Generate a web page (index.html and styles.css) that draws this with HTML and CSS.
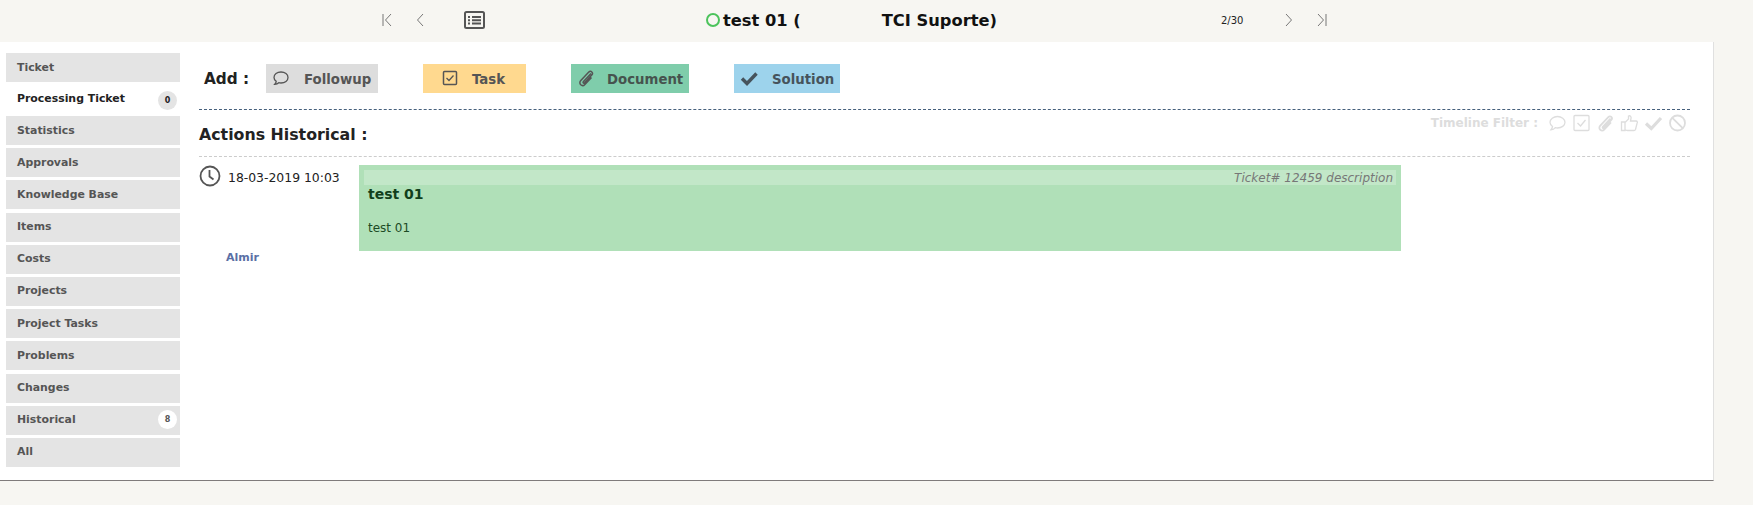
FILE: index.html
```html
<!DOCTYPE html>
<html lang="en">
<head>
    <meta charset="UTF-8">
    <title>test 01</title>
    <link rel="stylesheet" href="styles.css">
</head>
<body>
    <div class="topbar">
        <svg class="nav-icon first-nav" viewBox="0 0 10 14"><path d="M1 1v12M9 1 3.5 7 9 13"/></svg>
        <svg class="nav-icon prev-nav" viewBox="0 0 10 14"><path d="M8 1 2.5 7 8 13"/></svg>
        <svg class="list-icon" viewBox="0 0 21 18"><rect x="1" y="1" width="19" height="16" rx="1.5" fill="none" stroke="#555" stroke-width="2"/><path d="M4 5h2v2H4zM4 8.2h2v2H4zM4 11.4h2v2H4zM8 5h9v2H8zM8 8.2h9v2H8zM8 11.4h9v2H8z" fill="#555"/></svg>
        <span class="status-dot"></span>
        <span class="ticket-title">test 01 (</span>
        <span class="ticket-title entity">TCI Suporte)</span>
        <span class="pager">2/30</span>
        <svg class="nav-icon next-nav" viewBox="0 0 10 14"><path d="M2 1 7.5 7 2 13"/></svg>
        <svg class="nav-icon last-nav" viewBox="0 0 10 14"><path d="M1 1 6.5 7 1 13M9 1v12"/></svg>
    </div>

    <div class="main">
        <ul class="tabs">
            <li class="tab">Ticket</li>
            <li class="tab active">Processing Ticket <span class="badge">0</span></li>
            <li class="tab">Statistics</li>
            <li class="tab">Approvals</li>
            <li class="tab">Knowledge Base</li>
            <li class="tab">Items</li>
            <li class="tab">Costs</li>
            <li class="tab">Projects</li>
            <li class="tab">Project Tasks</li>
            <li class="tab">Problems</li>
            <li class="tab">Changes</li>
            <li class="tab">Historical <span class="badge">8</span></li>
            <li class="tab">All</li>
        </ul>

        <div class="content">
            <div class="add-row">
                <span class="add-label">Add :</span>
                <div class="add-btn followup">
                    <svg class="btn-icon" viewBox="0 0 18 18"><path d="M9 3c4 0 7 2.300 7 5.500S13 14 9 14c-.8 0-1.500-.1-2.200-.3C5.800 14.700 4.300 15.300 2.800 15.300c.8-.8 1.300-1.800 1.400-2.900C2.800 11.400 2 10 2 8.500 2 5.300 5 3 9 3z" fill="none" stroke="#555" stroke-width="1.300"/></svg>
                    Followup
                </div>
                <div class="add-btn task">
                    <svg class="btn-icon" viewBox="0 0 18 18"><rect x="2.500" y="2.500" width="13" height="13" rx="1" fill="none" stroke="#555" stroke-width="1.500"/><path d="M5.500 9l2.500 2.500 4.500-5" fill="none" stroke="#555" stroke-width="1.300"/></svg>
                    Task
                </div>
                <div class="add-btn document">
                    <svg class="btn-icon" viewBox="0 0 18 18"><path d="M14 4.500 6.500 12.500c-.9 1-.1 2.300 1.100 1.300l7.200-7.800c1.900-2.100-.9-5-3-2.900L3.800 11.600c-2.800 3 1.300 6.800 4.100 3.800l6.600-7" fill="none" stroke="#555" stroke-width="1.500"/></svg>
                    Document
                </div>
                <div class="add-btn solution">
                    <svg class="btn-icon" viewBox="0 0 18 18"><path d="M2 9.500 7 14.500 16.500 4.500" fill="none" stroke="#46535c" stroke-width="3.400"/></svg>
                    Solution
                </div>
            </div>

            <div class="history-head">
                <h2>Actions Historical :</h2>
                <div class="filter">
                    <span class="filter-label">Timeline Filter :</span>
                    <svg class="filter-icon" viewBox="0 0 18 18"><path d="M9 2.500c4 0 7.500 2.500 7.500 5.800S13 14 9 14c-.8 0-1.500-.1-2.200-.3C5.800 15 4.300 15.800 2.500 15.800c.8-.9 1.300-2 1.500-3.200C2.500 11.500 1.500 10 1.500 8.300 1.500 5 5 2.500 9 2.500z" fill="none" stroke="#ddd" stroke-width="1.300"/></svg>
                    <svg class="filter-icon" viewBox="0 0 18 18"><rect x="1.500" y="1.500" width="15" height="15" rx="1" fill="none" stroke="#ddd" stroke-width="1.300"/><path d="M5 9l3 3 5-6" fill="none" stroke="#ddd" stroke-width="1.300"/></svg>
                    <svg class="filter-icon" viewBox="0 0 18 18"><path d="M14 4.500 6.500 12.500c-.9 1-.1 2.300 1.100 1.300l7.200-7.800c1.900-2.100-.9-5-3-2.900L3.800 11.600c-2.800 3 1.300 6.800 4.100 3.800l6.600-7" fill="none" stroke="#ddd" stroke-width="1.800"/></svg>
                    <svg class="filter-icon" viewBox="0 0 18 18"><path d="M1 8h3.500v8.500H1zM4.500 8.500 8 5V2c1.800-.8 3 .8 2.500 2.500L10 7h5.500c1.500 0 1.700 1.500 1 2.500l-1.500 6c-.3.700-.8 1-1.500 1H7c-1 0-1.700-.5-2.500-.8" fill="none" stroke="#ddd" stroke-width="1.300"/></svg>
                    <svg class="filter-icon" viewBox="0 0 18 18"><path d="M1.500 9.500 6.800 14.500 16.500 4" fill="none" stroke="#ddd" stroke-width="3.200"/></svg>
                    <svg class="filter-icon" viewBox="0 0 18 18"><circle cx="9" cy="9" r="7.500" fill="none" stroke="#ddd" stroke-width="1.800"/><path d="M3.800 3.800 14.200 14.200" stroke="#ddd" stroke-width="1.800"/></svg>
                </div>
            </div>

            <div class="timeline-row">
                <div class="entry-meta">
                    <div class="entry-date">
                        <svg class="clock" viewBox="0 0 22 22"><circle cx="11" cy="11" r="9.500" fill="none" stroke="#555" stroke-width="1.800"/><path d="M10.500 5v6.500l4 3" fill="none" stroke="#555" stroke-width="1.800"/></svg>
                        <span class="date-text">18-03-2019 10:03</span>
                    </div>
                    <div class="entry-author">Almir</div>
                </div>
                <div class="entry-card">
                    <div class="entry-type">Ticket# 12459 description</div>
                    <div class="entry-title">test 01</div>
                    <div class="entry-text">test 01</div>
                </div>
            </div>
        </div>
    </div>
</body>
</html>
```

FILE: styles.css
```css
html, body {
    margin: 0;
    padding: 0;
}
body {
    background-color: #f7f6f2;
    font-family: "DejaVu Sans", sans-serif;
    height: 505px;
    overflow: hidden;
}
.topbar {
    display: flex;
    align-items: center;
    height: 42px;
    padding-bottom: 2px;
    box-sizing: border-box;
    padding-left: 382px;
}
.nav-icon {
    width: 10px;
    height: 14px;
    fill: none;
    stroke: #777;
    stroke-width: 1;
    flex: none;
}
.prev-nav { margin-left: 23px; }
.list-icon {
    width: 21px;
    height: 18px;
    margin-left: 39px;
    flex: none;
}
.status-dot {
    width: 10px;
    height: 10px;
    border: 2px solid #4cc35c;
    border-radius: 50%;
    margin-left: 221px;
    flex: none;
}
.ticket-title {
    font-weight: bold;
    font-size: 16.300px;
    color: #111;
    margin-left: 3px;
    white-space: nowrap;
}
.entity { margin-left: 81px; }
.pager {
    font-size: 10px;
    color: #222;
    margin-left: 224px;
}
.next-nav { margin-left: 41px; }
.last-nav { margin-left: 23px; }

.main {
    display: flex;
    width: 1714px;
    height: 439px;
    box-sizing: border-box;
    background: white;
    border-right: 1px solid #e0e0e0;
    border-bottom: 1px solid #7f7b7b;
}
.tabs {
    list-style: none;
    width: 174px;
    margin: 11px 0 0 6px;
    padding: 0;
    flex: none;
}
.tab {
    display: flex;
    justify-content: space-between;
    height: 29px;
    margin-bottom: 3.200px;
    padding: 7.500px 3px 0 11px;
    box-sizing: border-box;
    background-color: #e4e4e4;
    color: #555;
    font-size: 10.900px;
    line-height: 13px;
    font-weight: bold;
}
.tab:first-child { margin-bottom: 0; }
.active {
    background-color: white;
    color: #222;
    height: 31px;
    margin-bottom: 3px;
    padding-top: 10px;
}
.badge {
    width: 19px;
    height: 19px;
    margin-top: -3px;
    border-radius: 50%;
    background-color: white;
    color: #555;
    font-size: 8px;
    text-align: center;
    line-height: 19px;
}
.active .badge {
    margin-top: -1px;
    background-color: #e4e4e4;
    color: #222;
}
.content {
    flex: none;
    width: 1491px;
    margin-left: 19px;
}
.add-row {
    display: flex;
    align-items: center;
    height: 68px;
    box-sizing: border-box;
    border-bottom: 1px dashed #46607c;
    padding: 22px 0 17px 5px;
}
.add-label {
    font-size: 15.300px;
    font-weight: bold;
    color: #222;
    width: 62px;
    padding-top: 1px;
    flex: none;
}
.add-btn {
    display: flex;
    align-items: center;
    height: 29px;
    box-sizing: border-box;
    padding: 2px 6px 0;
    font-size: 13.300px;
    font-weight: bold;
    color: #555;
    flex: none;
}
.btn-icon {
    width: 18px;
    height: 18px;
    margin-top: -2px;
    flex: none;
}
.followup {
    width: 112px;
    background-color: #ddd;
    gap: 14px;
}
.task {
    width: 103px;
    margin-left: 45px;
    background-color: #ffd98f;
    padding-left: 18px;
    gap: 13px;
}
.document {
    width: 118px;
    margin-left: 45px;
    background-color: #7fcdab;
    color: #46534e;
    gap: 12px;
}
.solution {
    width: 106px;
    margin-left: 45px;
    background-color: #9dd3ec;
    color: #46535c;
    gap: 14px;
}
.history-head {
    display: flex;
    justify-content: space-between;
    height: 47px;
    box-sizing: border-box;
    border-bottom: 1px dashed #ccc;
}
.history-head h2 {
    margin: 15px 0 0;
    font-size: 15.800px;
    line-height: 20px;
    color: #222;
}
.filter {
    display: flex;
    align-items: center;
    gap: 5px;
    height: 18px;
    margin: 4px 3px 0 0;
}
.filter-label {
    font-size: 12px;
    font-weight: bold;
    color: #ddd;
    margin-right: 5px;
}
.filter-icon {
    width: 19px;
    height: 18px;
    flex: none;
}
.timeline-row {
    display: flex;
    margin-top: 8px;
}
.entry-meta {
    width: 160px;
    flex: none;
}
.entry-date {
    display: flex;
    align-items: center;
    gap: 7px;
    height: 22px;
    font-size: 12.400px;
    color: #222;
}
.date-text { padding-top: 3px; }
.clock {
    width: 22px;
    height: 22px;
    flex: none;
}
.entry-author {
    margin: 65px 0 0 27px;
    font-size: 11px;
    line-height: 12px;
    font-weight: bold;
    color: #5a6fa5;
}
.entry-card {
    width: 1042px;
    height: 86px;
    box-sizing: border-box;
    padding: 5px;
    background-color: #b0e0b8;
    color: #1c4a25;
}
.entry-type {
    height: 15px;
    padding-right: 3px;
    background-color: #c2e7c8;
    color: #777;
    font-size: 12px;
    font-style: italic;
    line-height: 17px;
    text-align: right;
}
.entry-title {
    margin: 0 0 0 4px;
    font-size: 14px;
    line-height: 18px;
    font-weight: bold;
    color: #123f1c;
}
.entry-text {
    margin: 18px 0 0 4px;
    font-size: 12px;
    line-height: 14px;
}
```
